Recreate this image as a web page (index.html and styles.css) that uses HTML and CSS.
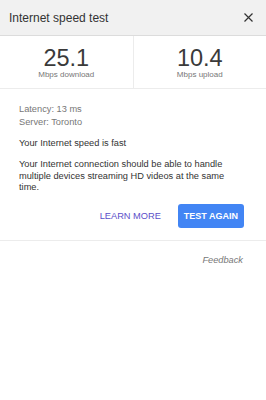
FILE: index.html
```html
<!DOCTYPE html>
<html>
<head>
<meta charset="utf-8">
<link rel="stylesheet" href="styles.css">
</head>
<body>
<div class="panel">
  <header class="header">
    <span class="title">Internet speed test</span>
    <svg class="close" width="9" height="9" viewBox="0 0 9 9"><path d="M0.5 0.5L8.5 8.5M8.5 0.5L0.5 8.5" stroke="#333" stroke-width="1.2" fill="none"/></svg>
  </header>
  <section class="stats">
    <div class="stat stat-first">
      <div class="num">25.1</div>
      <div class="unit">Mbps download</div>
    </div>
    <div class="stat">
      <div class="num">10.4</div>
      <div class="unit">Mbps upload</div>
    </div>
  </section>
  <section class="body">
    <div class="meta">Latency: 13 ms</div>
    <div class="meta">Server: Toronto</div>
    <div class="verdict">Your Internet speed is fast</div>
    <p class="desc">Your Internet connection should be able to handle multiple devices streaming HD videos at the same time.</p>
    <div class="actions">
      <span class="learn">LEARN MORE</span>
      <span class="again">TEST AGAIN</span>
    </div>
  </section>
  <footer class="footer">
    <span class="feedback">Feedback</span>
  </footer>
</div>
</body>
</html>
```
FILE: styles.css
```css
html, body {
  margin: 0;
  padding: 0;
  background: #fff;
}
body {
  font-family: "Liberation Sans", Arial, sans-serif;
  color: #333;
  width: 266px;
}
.header {
  height: 35px;
  background: #f1f1f1;
  border-bottom: 1px solid #dcdcdc;
  display: flex;
  align-items: center;
  justify-content: space-between;
  padding: 0 13px 0 9px;
}
.title {
  font-size: 12px;
  color: #333;
}
.close {
  display: block;
  margin-top: -1px;
}
.stats {
  display: flex;
  border-bottom: 1px solid #ececec;
}
.stat {
  flex: 1;
  text-align: center;
  padding: 10px 0 9px;
}
.stat-first {
  border-right: 1px solid #ececec;
}
.num {
  font-size: 23.5px;
  line-height: 24px;
  color: #3a3a3a;
}
.unit {
  font-size: 8px;
  line-height: 9px;
  color: #777;
}
.body {
  padding: 14px 22px 12px 19px;
  font-size: 9.25px;
}
.meta {
  line-height: 13px;
  color: #777;
}
.verdict {
  margin-top: 8px;
  line-height: 13px;
  color: #333;
}
.desc {
  margin: 9px 0 0;
  line-height: 11.5px;
  color: #333;
}
.actions {
  margin-top: 10px;
  display: flex;
  justify-content: flex-end;
  align-items: center;
  gap: 17px;
}
.learn {
  color: #5b4fc9;
  font-size: 9.25px;
}
.again {
  background: #4285f4;
  color: #fff;
  font-weight: bold;
  font-size: 9px;
  height: 24px;
  line-height: 24px;
  padding: 0 6px;
  border-radius: 3px;
}
.footer {
  border-top: 1px solid #ececec;
  padding: 10px 23px 0 0;
  text-align: right;
  line-height: 13px;
}
.feedback {
  font-size: 9.25px;
  font-style: italic;
  color: #777;
}
```
